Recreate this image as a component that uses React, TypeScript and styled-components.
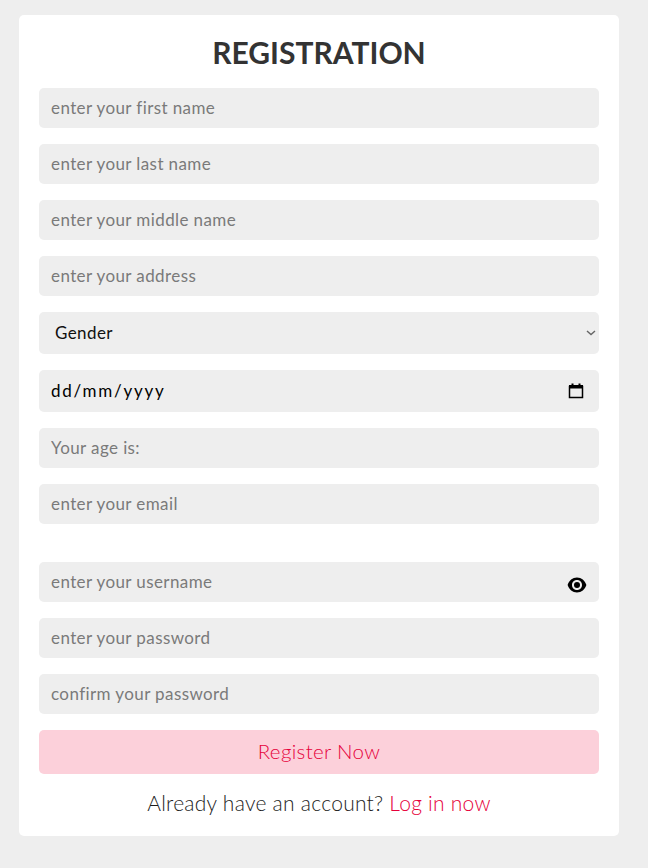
import React from "react";
import styled, { createGlobalStyle } from "styled-components";

const Global = createGlobalStyle`
  * { box-sizing: border-box; }
  html, body { margin: 0; padding: 0; background: #eeeeee; }
  body { font-family: Lato, "Open Sans", sans-serif; }
`;

const Page = styled.div`
  width: 648px;
  height: 868px;
  padding: 15px 29px 32px 19px;
  background: #eeeeee;
  overflow: hidden;
`;

const Card = styled.form`
  width: 600px;
  height: 821px;
  background: #ffffff;
  border-radius: 5px;
  padding: 20px 20px 0;
  display: flex;
  flex-direction: column;
`;

const Title = styled.h1`
  margin: 0 0 16px;
  height: 37px;
  line-height: 35px;
  text-align: center;
  font-size: 30px;
  font-weight: 700;
  color: #333333;
  letter-spacing: 0;
`;

const Fields = styled.div<{ $gap?: number }>`
  display: flex;
  flex-direction: column;
  gap: 16px;
  margin-bottom: ${(p) => p.$gap ?? 0}px;
`;

const Field = styled.div`
  position: relative;
  width: 100%;
`;

const TextInput = styled.input`
  display: block;
  width: 100%;
  height: 40px;
  padding: 0 12px 2px;
  border: none;
  outline: none;
  border-radius: 5px;
  background: #eeeeee;
  font-family: inherit;
  font-size: 17px;
  letter-spacing: 0.4px;
  color: #111111;
  &::placeholder {
    color: #7a7a7a;
    opacity: 1;
  }
`;

const DateInput = styled(TextInput)`
  height: 42px;
  letter-spacing: 1.75px;
  color: #000000;
`;

const Select = styled.select`
  display: block;
  width: 100%;
  height: 42px;
  padding: 0 16px 2px;
  border: none;
  outline: none;
  border-radius: 5px;
  background: #eeeeee;
  font-family: inherit;
  font-size: 17px;
  letter-spacing: 0.4px;
  color: #111111;
  appearance: none;
`;

const FieldIcon = styled.svg`
  position: absolute;
  display: block;
  pointer-events: none;
`;

const ChevronIcon = styled(FieldIcon)`
  right: 3px;
  top: 18px;
  width: 10px;
  height: 6px;
`;

const CalendarIcon = styled(FieldIcon)`
  right: 15px;
  top: 13px;
  width: 16px;
  height: 16px;
`;

const EyeIcon = styled(FieldIcon)`
  right: 12px;
  top: 14px;
  width: 20px;
  height: 18px;
`;

const Submit = styled.button`
  display: block;
  width: 100%;
  height: 44px;
  margin-top: 16px;
  padding: 0 0 2px;
  border: none;
  border-radius: 5px;
  background: #fcd0da;
  color: #e6003a;
  font-family: inherit;
  font-size: 20.5px;
  font-weight: 300;
  letter-spacing: 0.35px;
`;

const Footer = styled.p`
  margin: 15px 0 0;
  text-align: center;
  font-size: 21px;
  line-height: 28px;
  color: #1c1c1c;
  font-weight: 300;
  letter-spacing: 0.26px;
`;

const LoginLink = styled.a`
  color: #e6003a;
  text-decoration: none;
`;

export default function App() {
  return (
    <Page>
      <Global />
      <Card onSubmit={(e) => e.preventDefault()}>
        <Title>REGISTRATION</Title>
        <Fields $gap={38}>
          <TextInput placeholder="enter your first name" />
          <TextInput placeholder="enter your last name" />
          <TextInput placeholder="enter your middle name" />
          <TextInput placeholder="enter your address" />
          <Field>
            <Select defaultValue="">
              <option value="">Gender</option>
              <option value="male">Male</option>
              <option value="female">Female</option>
            </Select>
            <ChevronIcon viewBox="0 0 10 6">
              <path d="M1 1 L5 4.6 L9 1" fill="none" stroke="#666" strokeWidth="1.4" />
            </ChevronIcon>
          </Field>
          <Field>
            <DateInput defaultValue="dd/mm/yyyy" />
            <CalendarIcon viewBox="0 0 16 16">
              <path d="M1.5 3.5 h13 v11 h-13 z" fill="none" stroke="#000" strokeWidth="1.5" />
              <rect x="1" y="2" width="14" height="3.5" fill="#000" />
              <rect x="3.5" y="0.5" width="2" height="2" fill="#000" />
              <rect x="10.5" y="0.5" width="2" height="2" fill="#000" />
            </CalendarIcon>
          </Field>
          <TextInput placeholder="Your age is:" />
          <TextInput placeholder="enter your email" />
        </Fields>
        <Fields>
          <Field>
            <TextInput placeholder="enter your username" />
            <EyeIcon viewBox="0 0 20 18">
              <path
                fill="#000"
                fillRule="evenodd"
                d="M10 1.5C5.6 1.5 2 4.6 .6 9 2 13.4 5.6 16.5 10 16.5s8-3.1 9.4-7.5C18 4.6 14.4 1.5 10 1.5zM10 4c3 0 5 2.2 5 5s-2 5-5 5-5-2.2-5-5 2-5 5-5z"
              />
              <circle cx="10" cy="9" r="3" fill="#000" />
            </EyeIcon>
          </Field>
          <TextInput placeholder="enter your password" />
          <TextInput placeholder="confirm your password" />
        </Fields>
        <Submit type="submit">Register Now</Submit>
        <Footer>
          Already have an account? <LoginLink href="#">Log in now</LoginLink>
        </Footer>
      </Card>
    </Page>
  );
}
